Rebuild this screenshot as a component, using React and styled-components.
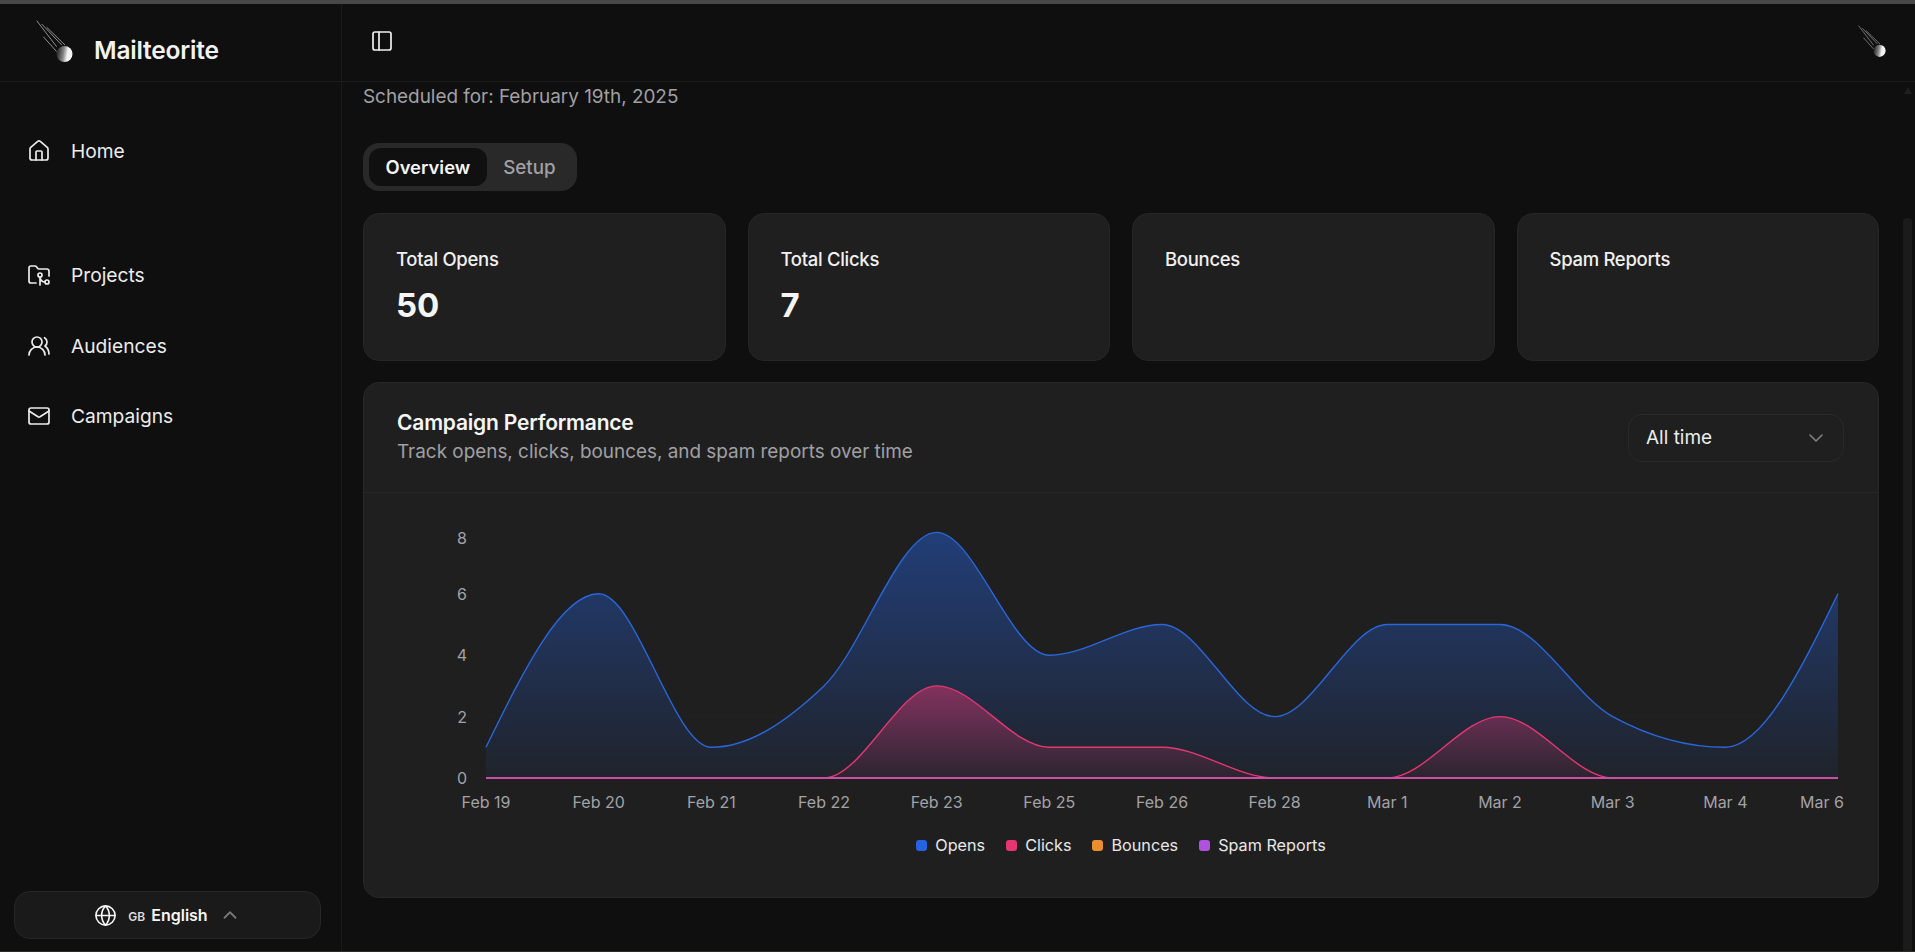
import React from 'react';
import styled, { createGlobalStyle } from 'styled-components';
import { House, FolderGit2, UsersRound, Mail, PanelLeft, Globe, ChevronUp, ChevronDown } from 'lucide-react';

const GlobalStyle = createGlobalStyle`
    html, body { margin: 0; height: 100%; background: #0f0f0f; }
    * { box-sizing: border-box; }
    body { font-family: Inter, "Noto Sans", sans-serif; color: #f2f2f2; }
`;

const Page = styled.div`
    height: 100vh;
    display: flex;
    flex-direction: column;
    overflow: hidden;
    background: #0f0f0f;
    border-bottom: 1px solid #2b2b25;
`;
const TopStrip = styled.div`
    height: 4px;
    flex: none;
    background: #484848;
`;
const Shell = styled.div`
    flex: 1;
    min-height: 0;
    display: flex;
`;
const Sidebar = styled.aside`
    width: 342px;
    flex: none;
    display: flex;
    flex-direction: column;
    border-right: 1px solid #1b1b1b;
`;
const Brand = styled.div`
    height: 78px;
    flex: none;
    display: flex;
    align-items: center;
    padding: 0 0 4px 36px;
    gap: 21px;
    border-bottom: 1px solid #1b1b1b;
`;
const BrandName = styled.span`
    font-size: 24.5px;
    font-weight: 600;
    letter-spacing: -0.2px;
    margin-top: 18px;
`;
const Nav = styled.nav`
    display: flex;
    flex-direction: column;
    padding-top: 34px;
`;
const NavItem = styled.a`
    height: 70.5px;
    display: flex;
    align-items: center;
    gap: 20px;
    padding-left: 27px;
    font-size: 19.2px;
    color: #ececec;
    margin-top: ${props => props.$spaced ? '53.5px' : '0'};
`;
const LangButton = styled.button`
    margin: auto 20px 12px 14px;
    height: 48px;
    display: flex;
    align-items: center;
    justify-content: center;
    background: #1a1a1a;
    border: 1px solid #262626;
    border-radius: 16px;
    color: #f5f5f5;
    font-family: inherit;
    font-size: 16px;
    font-weight: 600;
`;
const LangCode = styled.span`
    font-size: 12px;
    font-weight: 600;
    color: #dddddd;
    margin: 2px 6px 0 11px;
`;
const LangChevron = styled(ChevronUp)`
    color: #777777;
    margin-left: 11px;
`;
const Main = styled.main`
    flex: 1;
    min-width: 0;
    display: flex;
    flex-direction: column;
`;
const Header = styled.header`
    height: 78px;
    flex: none;
    display: flex;
    align-items: center;
    justify-content: space-between;
    padding: 0 29px 3px 28px;
    border-bottom: 1px solid #1b1b1b;
`;
const Body = styled.div`
    flex: 1;
    min-height: 0;
    display: flex;
`;
const Content = styled.div`
    flex: 1;
    min-width: 0;
    padding: 1px 21px 0;
`;
const ScrollStrip = styled.div`
    width: 15px;
    flex: none;
    display: flex;
    flex-direction: column;
    align-items: center;
    padding-top: 5px;
`;
const ScrollArrow = styled.div`
    width: 0;
    height: 0;
    border-left: 4px solid transparent;
    border-right: 4px solid transparent;
    border-bottom: 7px solid #1e1e1e;
`;
const ScrollThumb = styled.div`
    width: 9px;
    flex: 1;
    margin-top: 124px;
    background: #1b1b1b;
    border-radius: 4px 4px 0 0;
`;
const Scheduled = styled.p`
    margin: 0;
    height: 28px;
    line-height: 28px;
    font-size: 18.9px;
    color: #a0a0a5;
`;
const TabList = styled.div`
    width: 214px;
    height: 48px;
    margin-top: 32px;
    padding: 5px 6px;
    display: flex;
    align-items: center;
    background: #292929;
    border-radius: 16px;
`;
const Tab = styled.div`
    height: 38px;
    display: flex;
    align-items: center;
    padding: 0 16.5px;
    font-size: ${props => props.$active ? '18.4px' : '18.8px'};
    font-weight: ${props => props.$active ? 600 : 500};
    color: ${props => props.$active ? '#f5f5f5' : '#a0a0a5'};
    background: ${props => props.$active ? '#101010' : 'transparent'};
    border-radius: 12px;
`;
const StatGrid = styled.div`
    display: grid;
    grid-template-columns: repeat(4, 1fr);
    gap: 22px;
    margin-top: 22px;
`;
const StatCard = styled.div`
    height: 148px;
    padding: 33px 32px;
    background: #1f1f1f;
    border: 1px solid #262626;
    border-radius: 16px;
`;
const StatTitle = styled.div`
    font-size: 18.5px;
    line-height: 24px;
    font-weight: 500;
    letter-spacing: -0.3px;
    color: #f0f0f0;
`;
const StatValue = styled.div`
    margin-top: 14px;
    font-size: 33px;
    line-height: 40px;
    font-weight: 700;
    color: #f5f5f5;
`;
const ChartCard = styled.section`
    height: 516px;
    margin-top: 21px;
    background: #1f1f1f;
    border: 1px solid #272727;
    border-radius: 16px;
    display: flex;
    flex-direction: column;
`;
const ChartHead = styled.div`
    height: 110px;
    flex: none;
    display: flex;
    align-items: center;
    justify-content: space-between;
    padding: 0 34px 0 33px;
    border-bottom: 1px solid #272727;
`;
const ChartHeading = styled.div`
    margin-bottom: 2px;
`;
const ChartTitle = styled.h2`
    margin: 0;
    font-size: 21px;
    line-height: 29px;
    font-weight: 600;
    letter-spacing: -0.2px;
    color: #f5f5f5;
`;
const ChartSub = styled.p`
    margin: 0;
    font-size: 18.9px;
    line-height: 29px;
    color: #a0a0a5;
`;
const PeriodSelect = styled.div`
    width: 216px;
    height: 48px;
    display: flex;
    align-items: center;
    justify-content: space-between;
    padding: 0 15px 0 17px;
    font-size: 19px;
    color: #ececec;
    border: 1px solid #2a2a2a;
    border-radius: 14px;
`;
const SelectChevron = styled(ChevronDown)`
    color: #808080;
`;
const ChartSvg = styled.svg`
    display: block;
    flex: none;
`;
const AxisLabel = styled.text`
    font-family: Inter, sans-serif;
    font-size: 16px;
    fill: #a2a2a7;
`;
const Legend = styled.div`
    display: flex;
    justify-content: center;
    gap: 21px;
    margin-top: 10px;
`;
const LegendItem = styled.div`
    display: flex;
    align-items: center;
    gap: 8px;
    font-size: 16.2px;
    line-height: 24px;
    color: #e8e8e8;
`;
const Swatch = styled.span`
    width: 11px;
    height: 11px;
    border-radius: 3px;
    background: ${props => props.$color};
`;

// chart coordinates, in px inside the svg
const CHART_W = 1514;
const CHART_H = 330;
const X0 = 122;
const X1 = 1474;
const Y_ZERO = 285;
const UNIT = 30.7;

const labels = ['Feb 19', 'Feb 20', 'Feb 21', 'Feb 22', 'Feb 23', 'Feb 25', 'Feb 26', 'Feb 28', 'Mar 1', 'Mar 2', 'Mar 3', 'Mar 4', 'Mar 6'];
const opens = [1, 6, 1, 3, 8, 4, 5, 2, 5, 5, 2, 1, 6];
const clicks = [0, 0, 0, 0, 3, 1, 1, 0, 0, 2, 0, 0, 0];
const legend = [
    ['Opens', '#2563e0'],
    ['Clicks', '#e63672'],
    ['Bounces', '#ea8f30'],
    ['Spam Reports', '#af52de'],
];

const px = i => X0 + (X1 - X0) * i / (labels.length - 1);
const py = v => Y_ZERO - v * UNIT;

// same curve as d3 curveMonotoneX
const monotonePath = (values) => {
    const pts = values.map((v, i) => [px(i), py(v)]);
    const n = pts.length;
    const slopes = [];
    for (let i = 0; i < n - 1; i++) {
        slopes.push((pts[i + 1][1] - pts[i][1]) / (pts[i + 1][0] - pts[i][0]));
    }
    const t = new Array(n);
    for (let i = 1; i < n - 1; i++) {
        const s0 = slopes[i - 1];
        const s1 = slopes[i];
        const p = (s0 + s1) / 2;
        t[i] = (Math.sign(s0) + Math.sign(s1)) * Math.min(Math.abs(s0), Math.abs(s1), 0.5 * Math.abs(p)) || 0;
    }
    t[0] = (3 * slopes[0] - t[1]) / 2;
    t[n - 1] = (3 * slopes[n - 2] - t[n - 2]) / 2;
    let d = `M${pts[0][0]},${pts[0][1]}`;
    for (let i = 0; i < n - 1; i++) {
        const dx = (pts[i + 1][0] - pts[i][0]) / 3;
        d += `C${pts[i][0] + dx},${pts[i][1] + dx * t[i]} ${pts[i + 1][0] - dx},${pts[i + 1][1] - dx * t[i + 1]} ${pts[i + 1][0]},${pts[i + 1][1]}`;
    }
    return d;
};

const areaPath = (line) => `${line}L${X1},${Y_ZERO}L${X0},${Y_ZERO}Z`;

const MeteorLogo = ({ width, height, id }) => (
    <svg width={width} height={height} viewBox="0 0 37 42" fill="none">
        <defs>
            <linearGradient id={id} x1="0" y1="0" x2="1" y2="0.15">
                <stop offset="0.1" stopColor="#2a2a2a" />
                <stop offset="0.5" stopColor="#8a8a8a" />
                <stop offset="0.75" stopColor="#f4f4f4" />
            </linearGradient>
        </defs>
        <g stroke="#b0b0b0" strokeWidth="0.8">
            <path d="M0.7 0.7L20.7 26.7" />
            <path d="M5.7 4L25.7 25" />
            <path d="M10.7 7.3L29 25" />
            <path d="M7.3 16.7L20.7 31.7" />
        </g>
        <circle cx="28.5" cy="34" r="8" fill={`url(#${id})`} />
    </svg>
);

const Chart = () => {
    const opensLine = monotonePath(opens);
    const clicksLine = monotonePath(clicks);
    return (
        <ChartSvg width={CHART_W} height={CHART_H}>
            <defs>
                <linearGradient id="fillOpens" x1="0" y1="0" x2="0" y2="1">
                    <stop offset="0" stopColor="#2563e0" stopOpacity="0.46" />
                    <stop offset="1" stopColor="#2563e0" stopOpacity="0.06" />
                </linearGradient>
                <linearGradient id="fillClicks" x1="0" y1="0" x2="0" y2="1">
                    <stop offset="0" stopColor="#e63672" stopOpacity="0.5" />
                    <stop offset="1" stopColor="#e63672" stopOpacity="0.06" />
                </linearGradient>
            </defs>
            {[2, 4, 6, 8].map(v => (
                <line key={v} x1={X0} x2={X1} y1={py(v)} y2={py(v)} stroke="#222222" />
            ))}
            {[0, 2, 4, 6, 8].map(v => (
                <AxisLabel key={v} x={X0 - 19} y={py(v) + (v === 8 ? 12 : 6)} textAnchor="end">{v}</AxisLabel>
            ))}
            {labels.map((label, i) => (
                <AxisLabel key={label} x={i === 12 ? X1 - 16 : px(i)} y={Y_ZERO + 30} textAnchor="middle">{label}</AxisLabel>
            ))}
            <path d={areaPath(opensLine)} fill="url(#fillOpens)" />
            <path d={opensLine} fill="none" stroke="#2a66dc" strokeWidth="1.4" />
            <path d={areaPath(clicksLine)} fill="url(#fillClicks)" />
            <path d={clicksLine} fill="none" stroke="#e63672" strokeWidth="1.4" />
            <line x1={X0} x2={X1} y1={Y_ZERO} y2={Y_ZERO} stroke="#c94fa6" strokeWidth="2" />
        </ChartSvg>
    );
};

const App = () => (
    <Page>
        <GlobalStyle />
        <TopStrip />
        <Shell>
            <Sidebar>
                <Brand>
                    <MeteorLogo width={37} height={42} id="meteorA" />
                    <BrandName>Mailteorite</BrandName>
                </Brand>
                <Nav>
                    <NavItem><House size={24} strokeWidth={1.7} />Home</NavItem>
                    <NavItem $spaced><FolderGit2 size={24} strokeWidth={1.7} />Projects</NavItem>
                    <NavItem><UsersRound size={24} strokeWidth={1.7} />Audiences</NavItem>
                    <NavItem><Mail size={24} strokeWidth={1.7} />Campaigns</NavItem>
                </Nav>
                <LangButton>
                    <Globe size={23} strokeWidth={1.7} />
                    <LangCode>GB</LangCode>
                    English
                    <LangChevron size={22} strokeWidth={2} />
                </LangButton>
            </Sidebar>
            <Main>
                <Header>
                    <PanelLeft size={24} strokeWidth={1.7} color="#f0f0f0" />
                    <MeteorLogo width={28} height={32} id="meteorB" />
                </Header>
                <Body>
                    <Content>
                        <Scheduled>Scheduled for: February 19th, 2025</Scheduled>
                        <TabList>
                            <Tab $active>Overview</Tab>
                            <Tab>Setup</Tab>
                        </TabList>
                        <StatGrid>
                            <StatCard>
                                <StatTitle>Total Opens</StatTitle>
                                <StatValue>50</StatValue>
                            </StatCard>
                            <StatCard>
                                <StatTitle>Total Clicks</StatTitle>
                                <StatValue>7</StatValue>
                            </StatCard>
                            <StatCard>
                                <StatTitle>Bounces</StatTitle>
                            </StatCard>
                            <StatCard>
                                <StatTitle>Spam Reports</StatTitle>
                            </StatCard>
                        </StatGrid>
                        <ChartCard>
                            <ChartHead>
                                <ChartHeading>
                                    <ChartTitle>Campaign Performance</ChartTitle>
                                    <ChartSub>Track opens, clicks, bounces, and spam reports over time</ChartSub>
                                </ChartHeading>
                                <PeriodSelect>
                                    All time
                                    <SelectChevron size={24} strokeWidth={1.6} />
                                </PeriodSelect>
                            </ChartHead>
                            <Chart />
                            <Legend>
                                {legend.map(([name, color]) => (
                                    <LegendItem key={name}><Swatch $color={color} />{name}</LegendItem>
                                ))}
                            </Legend>
                        </ChartCard>
                    </Content>
                    <ScrollStrip>
                        <ScrollArrow />
                        <ScrollThumb />
                    </ScrollStrip>
                </Body>
            </Main>
        </Shell>
    </Page>
);

export default App;
